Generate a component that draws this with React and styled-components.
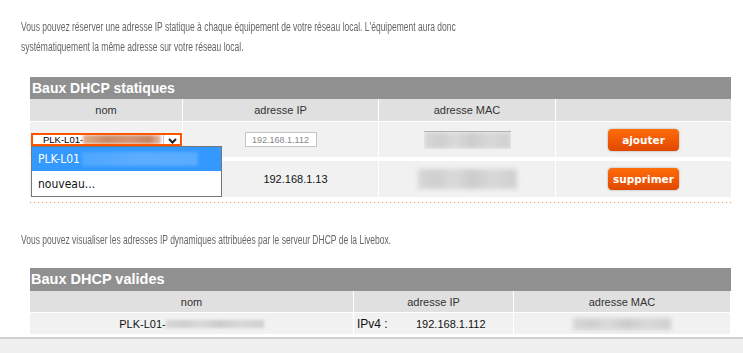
import React from 'react';
import styled, { createGlobalStyle } from 'styled-components';

const GlobalStyle = createGlobalStyle`
  body {
    margin: 0;
    background: #fff;
    font-family: "Liberation Sans", Arial, sans-serif;
  }
`;

const Page = styled.div`
  width: 743px;
  display: flex;
  flex-direction: column;
  overflow: hidden;
`;

// the original uses a condensed face; squeeze Liberation Sans to match
const Intro = styled.p`
  margin: ${p => p.$top}px 0 0 21px;
  width: 700px;
  color: #666;
  font-size: 12.5px;
  line-height: 20px;
  white-space: nowrap;
  transform: scaleX(0.68);
  transform-origin: left top;
`;

const Section = styled.div`
  margin: ${p => p.$top}px 0 0 30px;
  width: 701px;
  display: flex;
  flex-direction: column;
`;

const TitleBar = styled.div`
  height: ${p => p.$h}px;
  line-height: ${p => p.$h}px;
  padding-left: ${p => p.$pad}px;
  background: #909090;
  color: #fff;
  font-weight: bold;
  font-size: ${p => p.$size}px;
`;

const Row = styled.div`
  display: grid;
  grid-template-columns: ${p => p.$cols};
  column-gap: 1px;
  height: ${p => p.$h}px;
  margin-top: ${p => p.$gap || 0}px;
`;

const HeadCell = styled.div`
  background: #e0e0e0;
  color: #333;
  font-size: 11px;
  display: flex;
  align-items: center;
  justify-content: center;
`;

const Cell = styled.div`
  background: #f1f1f1;
  color: #111;
  font-size: 11px;
  display: flex;
  align-items: center;
  justify-content: ${p => p.$align || 'center'};
  padding-left: ${p => p.$pad || 0}px;
  position: relative;
`;

const SelectWrap = styled.div`
  position: relative;
  margin-left: 1px;
`;

const SelectBox = styled.div`
  box-sizing: border-box;
  width: 151px;
  height: 13px;
  border: 2px solid #ff5500;
  background: #fff;
  display: flex;
  align-items: center;
  padding-left: 10px;
  font-size: 9.5px;
  color: #000;
  overflow: hidden;
`;

const Blur = styled.span`
  display: inline-block;
  width: ${p => p.$w}px;
  height: ${p => p.$h}px;
  background: ${p => p.$bg};
  filter: blur(${p => p.$blur ?? 1.5}px);
  margin-left: ${p => p.$ml || 0}px;
`;

const ArrowBox = styled.span`
  margin-left: auto;
  width: 16px;
  height: 100%;
  border-left: 1px solid #b8d0ea;
  display: flex;
  align-items: flex-end;
  justify-content: center;
`;

const Dropdown = styled.div`
  position: absolute;
  top: 13px;
  left: 0;
  width: 191px;
  box-sizing: border-box;
  border: 1px solid #777;
  background: #fff;
  z-index: 5;
  font-family: "DejaVu Sans Condensed", "DejaVu Sans", sans-serif;
  font-size: 12px;
`;

const Option = styled.div`
  height: ${p => p.$h}px;
  display: flex;
  align-items: center;
  padding-left: 6px;
  background: ${p => p.$active ? '#3399ff' : '#fff'};
  color: ${p => p.$active ? '#fff' : '#111'};
`;

const IpInput = styled.div`
  box-sizing: border-box;
  width: 72px;
  height: 15px;
  border: 1px solid #c4c4c4;
  background: #fff;
  color: #888;
  font-size: 9px;
  display: flex;
  align-items: center;
  justify-content: center;
`;

const MacField = styled.div`
  width: 87px;
  height: 17px;
  border-top: 1px solid #b0b0b0;
  display: flex;
  overflow: hidden;
`;

const OrangeButton = styled.button`
  box-sizing: border-box;
  width: 73px;
  height: 24px;
  border: 1px solid #d8d8d8;
  border-radius: 5px;
  box-shadow: 0 0 0 1px #ececec;
  background: linear-gradient(#ff6c0a, #e04800);
  color: #fff;
  font-family: "DejaVu Sans", Verdana, sans-serif;
  font-weight: bold;
  font-size: 10.5px;
  padding: 0;
  cursor: pointer;
`;

const Dotted = styled.div`
  margin: 5px 0 0 30px;
  width: 701px;
  height: 1px;
  background-image: linear-gradient(to right, #f08a4b 1px, transparent 1px);
  background-size: 4px 1px;
`;

const IpLabel = styled.span`
  width: 59px;
  font-size: 12px;
`;

const Footer = styled.div`
  margin-top: 3px;
  height: 20px;
  border-top: 2px solid #d2d2d2;
  background: #f0f0f0;
`;

const Chevron = () => (
  <svg width="9" height="6" viewBox="0 0 9 6">
    <polyline points="1,1 4.5,4.5 8,1" fill="none" stroke="#222" strokeWidth="2" />
  </svg>
);

const COLS1 = '152px 195px 176px 175px';
const COLS2 = '323px 159px 216px';

const greyBlur = 'linear-gradient(90deg, #d6d6d6, #cfcfcf 20%, #dadada 35%, #cccccc 55%, #d8d8d8 75%, #d0d0d0)';

export default function App() {
  return (
    <Page>
      <GlobalStyle />
      <Intro $top={17}>
        Vous pouvez réserver une adresse IP statique à chaque équipement de votre réseau local. L'équipement aura donc
        <br />
        systématiquement la même adresse sur votre réseau local.
      </Intro>

      <Section $top={20}>
        <TitleBar $h={22} $size={14} $pad={2}>Baux DHCP statiques</TitleBar>
        <Row $cols={COLS1} $h={22}>
          <HeadCell>nom</HeadCell>
          <HeadCell>adresse IP</HeadCell>
          <HeadCell>adresse MAC</HeadCell>
          <HeadCell />
        </Row>
        <Row $cols={COLS1} $h={35} $gap={1}>
          <Cell $align="flex-start">
            <SelectWrap>
              <SelectBox>
                PLK-L01-
                <Blur $w={78} $h={9} $bg="linear-gradient(90deg, #e0aa8a, #c98a66 30%, #d39474 60%, #c58462 85%, #e6bca4)" />
                <ArrowBox><Chevron /></ArrowBox>
              </SelectBox>
              <Dropdown>
                <Option $active $h={24}>
                  PLK-L01
                  <Blur $w={116} $h={14} $ml={2} $bg="linear-gradient(90deg, #4ea6ff, #5cadff 50%, #58abff)" />
                </Option>
                <Option $h={25}>nouveau...</Option>
              </Dropdown>
            </SelectWrap>
          </Cell>
          <Cell>
            <IpInput>192.168.1.112</IpInput>
          </Cell>
          <Cell>
            <MacField>
              <Blur $w={87} $h={17} $blur={2} $bg={greyBlur} />
            </MacField>
          </Cell>
          <Cell>
            <OrangeButton>ajouter</OrangeButton>
          </Cell>
        </Row>
        <Row $cols={COLS1} $h={36} $gap={4}>
          <Cell />
          <Cell $pad={30}>192.168.1.13</Cell>
          <Cell>
            <Blur $w={99} $h={20} $blur={2.5} $bg={greyBlur} />
          </Cell>
          <Cell>
            <OrangeButton>supprimer</OrangeButton>
          </Cell>
        </Row>
      </Section>

      <Dotted />

      <Intro $top={27}>
        Vous pouvez visualiser les adresses IP dynamiques attribuées par le serveur DHCP de la Livebox.
      </Intro>

      <Section $top={18}>
        <TitleBar $h={23} $size={14.5} $pad={1}>Baux DHCP valides</TitleBar>
        <Row $cols={COLS2} $h={21}>
          <HeadCell>nom</HeadCell>
          <HeadCell>adresse IP</HeadCell>
          <HeadCell>adresse MAC</HeadCell>
        </Row>
        <Row $cols={COLS2} $h={21} $gap={1}>
          <Cell>
            PLK-L01-
            <Blur $w={98} $h={8} $blur={1.5} $bg={greyBlur} />
          </Cell>
          <Cell $align="flex-start" $pad={3}>
            <IpLabel>IPv4 :</IpLabel>
            192.168.1.112
          </Cell>
          <Cell>
            <Blur $w={98} $h={12} $blur={2} $bg={greyBlur} />
          </Cell>
        </Row>
      </Section>

      <Footer />
    </Page>
  );
}
